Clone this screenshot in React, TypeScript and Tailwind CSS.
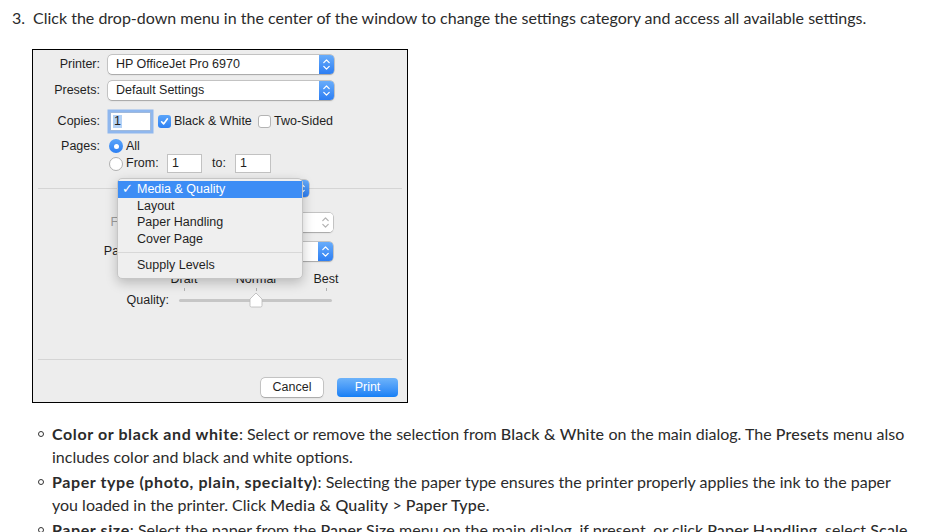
import React from 'react';

// small up/down arrows used on the popup buttons
const Stepper = ({ disabled = false }: { disabled?: boolean }) => (
  <div
    className={
      disabled
        ? 'flex h-full w-[15px] items-center justify-center rounded-r-[4px] bg-white'
        : 'flex h-full w-[15px] items-center justify-center rounded-r-[4px] bg-gradient-to-b from-[#68acfa] to-[#2c7ef3]'
    }
  >
    <svg width="9" height="13" viewBox="0 0 9 13" fill="none" stroke={disabled ? '#b4b4b4' : '#ffffff'} strokeWidth="1.3" strokeLinecap="round" strokeLinejoin="round">
      <path d="M1.8 4.6 L4.5 1.9 L7.2 4.6" />
      <path d="M1.8 8.4 L4.5 11.1 L7.2 8.4" />
    </svg>
  </div>
);

const Select = ({ value, className = '', disabled = false }: { value: string; className?: string; disabled?: boolean }) => (
  <div
    className={`flex h-[19px] items-stretch rounded-[4px] bg-white shadow-[0_0_0_0.5px_rgba(0,0,0,0.3),0_0.5px_1.5px_rgba(0,0,0,0.18)] ${className}`}
  >
    <span className={disabled ? 'flex flex-1 items-center truncate pl-[8px] text-[#b0b0b0]' : 'flex flex-1 items-center truncate pl-[8px]'}>{value}</span>
    <Stepper disabled={disabled} />
  </div>
);

const Checkbox = ({ checked = false, className = '' }: { checked?: boolean; className?: string }) =>
  checked ? (
    <span className={`flex size-[13px] shrink-0 items-center justify-center rounded-[3px] bg-gradient-to-b from-[#5aa4f9] to-[#2d80f3] ${className}`}>
      <svg width="9" height="9" viewBox="0 0 9 9" fill="none" stroke="#fff" strokeWidth="1.6" strokeLinecap="round" strokeLinejoin="round">
        <path d="M1.6 4.8 L3.6 6.9 L7.4 1.8" />
      </svg>
    </span>
  ) : (
    <span className={`size-[13px] shrink-0 rounded-[3px] border border-[#b4b4b4] bg-white ${className}`} />
  );

const Radio = ({ checked = false, className = '' }: { checked?: boolean; className?: string }) =>
  checked ? (
    <span className={`flex size-[14px] shrink-0 items-center justify-center rounded-full bg-gradient-to-b from-[#5aa4f9] to-[#2d80f3] ${className}`}>
      <span className="size-[5px] rounded-full bg-white" />
    </span>
  ) : (
    <span className={`size-[14px] shrink-0 rounded-full border border-[#b0b0b0] bg-white ${className}`} />
  );

const Field = ({ children, className = '' }: { children: React.ReactNode; className?: string }) => (
  <div className={`flex h-[19px] items-center border border-[#c2c2c2] bg-white pl-[4px] ${className}`}>{children}</div>
);

const menuItems = ['Layout', 'Paper Handling', 'Cover Page'];

const PrintDialog = () => (
  <div className="relative ml-[32px] mt-[19px] flex h-[354px] w-[376px] flex-col border border-black bg-[#ededed] font-['Liberation_Sans',Arial,sans-serif] text-[12.5px] leading-none text-[#1f1f1f]">
    <div className="mt-[5px] flex h-[19px] items-center">
      <span className="w-[67px] text-right">Printer:</span>
      <Select className="ml-[8px] w-[226px]" value="HP OfficeJet Pro 6970" />
    </div>
    <div className="mt-[7px] flex h-[19px] items-center">
      <span className="w-[67px] text-right">Presets:</span>
      <Select className="ml-[8px] w-[226px]" value="Default Settings" />
    </div>

    <div className="mt-[12px] flex h-[19px] items-center">
      <span className="w-[67px] text-right">Copies:</span>
      <div className="ml-[10px] flex h-[19px] w-[41px] items-center border border-[#9fb9dc] bg-white pl-[2px] shadow-[0_0_0_2.5px_#8fb7ee]">
        <span className="bg-[#b4d2f6] px-[1px]">1</span>
      </div>
      <Checkbox checked className="ml-[7px]" />
      <span className="ml-[3px] w-[84px]">Black &amp; White</span>
      <Checkbox />
      <span className="ml-[3px]">Two-Sided</span>
    </div>

    <div className="mt-[7px] flex h-[16px] items-center">
      <span className="w-[67px] text-right">Pages:</span>
      <Radio checked className="ml-[9px]" />
      <span className="ml-[3px]">All</span>
    </div>
    <div className="flex h-[19px] items-center">
      <Radio className="ml-[76px]" />
      <span className="ml-[3px] w-[41px]">From:</span>
      <Field className="w-[35px]">1</Field>
      <span className="ml-[10px] w-[23px]">to:</span>
      <Field className="w-[36px]">1</Field>
    </div>

    {/* section popup sitting on the divider */}
    <div className="mt-[7px] grid h-[17px]">
      <div className="col-start-1 row-start-1 mx-[5px] h-px self-center bg-[#d5d5d5]" />
      <div className="col-start-1 row-start-1 ml-[96px] flex h-[17px] w-[180px] items-stretch rounded-[4px] bg-white shadow-[0_0_0_0.5px_rgba(0,0,0,0.3)]">
        <span className="flex flex-1 items-center pl-[8px]">Media &amp; Quality</span>
        <Stepper />
      </div>
    </div>

    <div className="mt-[16px] flex h-[19px] items-center">
      <span className="w-[138px] text-right text-[#9c9c9c]">Feed from:</span>
      <Select disabled className="ml-[8px] w-[154px]" value="Auto Select" />
    </div>
    <div className="mt-[10px] flex h-[19px] items-center">
      <span className="w-[138px] text-right">Paper Type:</span>
      <Select className="ml-[8px] w-[154px]" value="Plain Paper" />
    </div>

    {/* quality slider */}
    <div className="mt-[12px] flex h-[12px] items-center pl-[126px]">
      <span className="w-[50px] text-center">Draft</span>
      <span className="ml-[22px] w-[50px] text-center">Normal</span>
      <span className="ml-[20px] w-[50px] text-center">Best</span>
    </div>
    <div className="mt-[3px] flex h-[3px]">
      <span className="ml-[151px] w-px bg-[#b3b3b3]" />
      <span className="ml-[71px] w-px bg-[#b3b3b3]" />
      <span className="ml-[69px] w-px bg-[#b3b3b3]" />
    </div>
    <div className="mt-[2px] flex h-[14px] items-center">
      <span className="w-[136px] text-right">Quality:</span>
      <div className="relative ml-[10px] flex h-[14px] w-[153px] items-center">
        <div className="h-[3px] w-full rounded-full bg-[#c6c6c6]" />
        <svg className="absolute left-[70px] top-[-1px]" width="14" height="16" viewBox="0 0 14 16">
          <path d="M1 7 L7 1 L13 7 L13 13.5 Q13 15 11.5 15 L2.5 15 Q1 15 1 13.5 Z" fill="#ffffff" stroke="#b8b8b8" strokeWidth="0.8" />
        </svg>
      </div>
    </div>

    <div className="mx-[5px] mt-auto h-px bg-[#d5d5d5]" />
    <div className="mb-[5px] mt-[18px] flex justify-end gap-[14px] pr-[9px]">
      <button className="flex h-[19px] w-[62px] items-center justify-center rounded-[4px] bg-white shadow-[0_0_0_0.5px_rgba(0,0,0,0.3),0_0.5px_1.5px_rgba(0,0,0,0.18)]">
        Cancel
      </button>
      <button className="flex h-[19px] w-[61px] items-center justify-center rounded-[4px] bg-gradient-to-b from-[#6db3fa] to-[#137ff5] text-white">
        Print
      </button>
    </div>

    {/* open category menu */}
    <div className="absolute left-[84px] top-[128px] w-[186px] rounded-[5px] border border-[#c6c6c6] bg-[#efefef] pb-[4px] pt-[2px] shadow-[0_4px_12px_rgba(0,0,0,0.22)]">
      <div className="flex h-[16.5px] items-center bg-[#3d8df5] text-white">
        <span className="w-[19px] pl-[4px]">✓</span>
        <span>Media &amp; Quality</span>
      </div>
      {menuItems.map((item) => (
        <div key={item} className="flex h-[16.5px] items-center pl-[19px]">
          {item}
        </div>
      ))}
      <div className="py-[4.5px]">
        <div className="h-px bg-[#d8d8d8]" />
      </div>
      <div className="flex h-[16.5px] items-center pl-[19px]">Supply Levels</div>
    </div>
  </div>
);

const Bullet = () => <span className="mr-[8px] mt-[8.25px] size-[6px] shrink-0 rounded-full border border-[#333]" />;

export default function App() {
  return (
    <div className="h-[532px] w-[943px] overflow-hidden bg-white font-['Lato',sans-serif] text-[16px] text-[#2b2b2b]">
      <div className="flex pl-[12px] pt-[6px] leading-[24px]">
        <span className="w-[21px]">3.</span>
        <span>Click the drop-down menu in the center of the window to change the settings category and access all available settings.</span>
      </div>

      <PrintDialog />

      <ul className="mt-[20px] w-[912px] pl-[38px] leading-[22.5px]">
        <li className="flex">
          <Bullet />
          <p>
            <b className="font-bold tracking-[0.6px]">Color or black and white</b>: Select or remove the selection from{' '}
            <span className="font-medium tracking-[0.2px]">Black &amp; White</span> on the main dialog. The{' '}
            <span className="font-medium tracking-[0.2px]">Presets</span> menu also includes color and black and white options.
          </p>
        </li>
        <li className="mt-[3px] flex">
          <Bullet />
          <p>
            <b className="font-bold tracking-[0.6px]">Paper type (photo, plain, specialty)</b>: Selecting the paper type ensures the printer properly applies the ink to the paper you loaded in the printer. Click{' '}
            <span className="font-medium tracking-[0.2px]">Media &amp; Quality</span> &gt; <span className="font-medium tracking-[0.2px]">Paper Type</span>.
          </p>
        </li>
        <li className="mt-[3px] flex">
          <Bullet />
          <p>
            <b className="font-bold tracking-[0.6px]">Paper size</b>: Select the paper from the <span className="font-medium tracking-[0.2px]">Paper Size</span> menu on the main dialog, if present, or click{' '}
            <span className="font-medium tracking-[0.2px]">Paper Handling</span>, select <span className="font-medium tracking-[0.2px]">Scale to fit paper size</span>, and then select the paper size.
          </p>
        </li>
      </ul>
    </div>
  );
}
